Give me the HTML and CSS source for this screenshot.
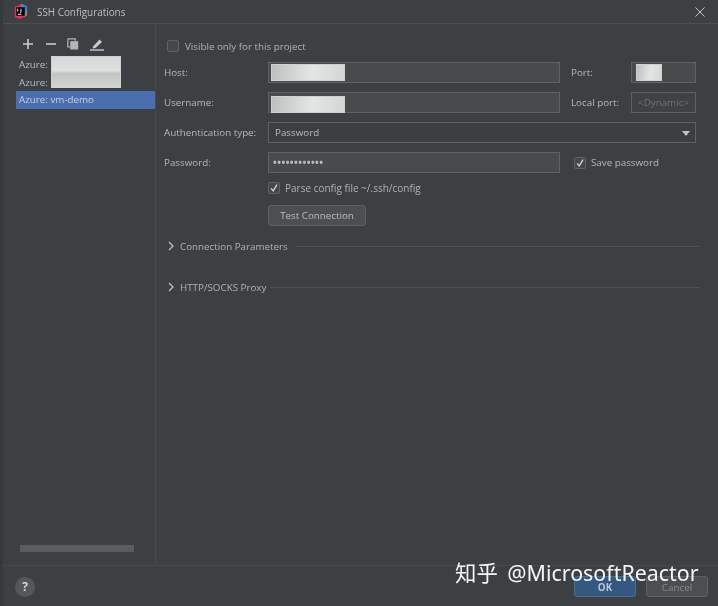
FILE: index.html
```html
<!DOCTYPE html>
<html lang="en">
<head>
<meta charset="utf-8">
<title>SSH Configurations</title>
<link rel="stylesheet" href="styles.css">
</head>
<body>
<div class="window">
  <header class="titlebar">
    <svg class="logo" viewBox="0 0 16 16" width="15" height="15">
      <defs>
        <linearGradient id="lg" x1="0" y1="0" x2="1" y2="1">
          <stop offset="0" stop-color="#21d789"/><stop offset=".45" stop-color="#087cfa"/><stop offset="1" stop-color="#fc801d"/>
        </linearGradient>
      </defs>
      <path d="M2 3 L9 0 L15 2 L15 12 L8 16 L2 14 Z" fill="#e0315e"/>
      <path d="M9 0 L15 2 L15 12 L12 14 Z" fill="url(#lg)"/>
      <rect x="3.5" y="3.5" width="9" height="9" fill="#000"/>
      <rect x="5" y="10.4" width="4" height="1" fill="#fff"/>
      <path d="M8.5 5v3.4q0 .9-1 .9" stroke="#fff" stroke-width="1" fill="none"/>
      <path d="M5 5v3" stroke="#fff" stroke-width="1" fill="none"/>
    </svg>
    <span class="title">SSH Configurations</span>
    <svg class="close" viewBox="0 0 10 10" width="10" height="10"><path d="M.5.5l9 9M9.5.5l-9 9" stroke="#c4c6c6" stroke-width="1" fill="none"/></svg>
  </header>

  <div class="main">
    <aside class="sidebar">
      <div class="toolbar">
        <svg class="tool" viewBox="0 0 12 12" width="12" height="12"><path d="M6 1v10M1 6h10" stroke="#c9cbcb" stroke-width="1.6"/></svg>
        <svg class="tool" viewBox="0 0 12 12" width="12" height="12"><path d="M1 6h10" stroke="#c9cbcb" stroke-width="1.6"/></svg>
        <svg class="tool" viewBox="0 0 12 12" width="12" height="12"><path d="M.8.8h7.4v2M.8.8v8h2" stroke="#b4b6b6" stroke-width="1.2" fill="none"/><rect x="3.2" y="3.2" width="8" height="8.3" fill="#b4b6b6"/></svg>
        <svg class="tool" viewBox="0 0 14 14" width="14" height="14"><path d="M3 9.5 L9.5 2.5 L12 5 L5.5 11 L2.8 11.4 Z" fill="#c9cbcb"/><path d="M0 13h14" stroke="#c9cbcb" stroke-width="1.4"/></svg>
      </div>
      <ul class="list">
        <li class="item">Azure:</li>
        <li class="item">Azure:</li>
        <li class="item selected">Azure: vm-demo</li>
      </ul>
      <div class="redact redact-list"></div>
      <div class="scrollbar"></div>
    </aside>

    <section class="content">
      <label class="check visible-only"><span class="box"></span>Visible only for this project</label>
      <div class="form">
        <span class="label">Host:</span>
        <div class="field"><span class="redact redact-field"></span></div>
        <span class="label label-r">Port:</span>
        <div class="field"><span class="redact redact-port"></span></div>

        <span class="label">Username:</span>
        <div class="field"><span class="redact redact-field redact-low"></span></div>
        <span class="label label-r">Local port:</span>
        <div class="field placeholder">&lt;Dynamic&gt;</div>

        <span class="label">Authentication type:</span>
        <div class="select">Password
          <svg class="caret" viewBox="0 0 8 5" width="8" height="5"><path d="M0 0h8L4 5z" fill="#c0c2c2"/></svg>
        </div>

        <span class="label">Password:</span>
        <div class="field dots">••••••••••••</div>
        <label class="check save"><span class="box on"><svg viewBox="0 0 12 12" width="12" height="12"><path d="M2.5 6.5l2.6 3L9.6 2" stroke="#d5d7d7" stroke-width="1.6" fill="none"/></svg></span>Save password</label>
      </div>
      <label class="check parse"><span class="box on"><svg viewBox="0 0 12 12" width="12" height="12"><path d="M2.5 6.5l2.6 3L9.6 2" stroke="#d5d7d7" stroke-width="1.6" fill="none"/></svg></span>Parse config file ~/.ssh/config</label>
      <button class="btn test">Test Connection</button>
      <div class="group group-conn">
        <svg class="chev" viewBox="0 0 6 10" width="6" height="10"><path d="M1 1l4 4-4 4" stroke="#c4c6c6" stroke-width="1.2" fill="none"/></svg>
        <span>Connection Parameters</span><i class="rule"></i>
      </div>
      <div class="group group-http">
        <svg class="chev" viewBox="0 0 6 10" width="6" height="10"><path d="M1 1l4 4-4 4" stroke="#c4c6c6" stroke-width="1.2" fill="none"/></svg>
        <span>HTTP/SOCKS Proxy</span><i class="rule"></i>
      </div>
    </section>
  </div>

  <footer class="footer">
    <span class="help">?</span>
    <div class="actions">
      <button class="btn ok">OK</button>
      <button class="btn cancel">Cancel</button>
    </div>
  </footer>
  <div class="watermark">知乎 @MicrosoftReactor</div>
</div>
</body>
</html>
```

FILE: styles.css
```css
* { box-sizing: border-box; }
html, body { margin: 0; padding: 0; }
body {
  width: 718px;
  height: 606px;
  overflow: hidden;
  background: #3c3f41;
  font-family: "Open Sans", "Noto Sans", sans-serif;
  font-size: 9.8px;
  color: #babcbc;
}
.window {
  position: relative;
  display: flex;
  flex-direction: column;
  width: 718px;
  height: 606px;
  background: #3d4042;
  border-left: 3px solid #36393a;
  filter: blur(.35px);
}
.titlebar {
  display: flex;
  align-items: center;
  height: 24px;
  padding: 0 13px 0 10px;
  border-bottom: 1px solid #4b4e50;
  flex: none;
}
.logo { flex: none; margin-top: -1px; }
.title { margin-left: 9px; font-size: 9.9px; color: #bcbebe; }
.close { margin-left: auto; }

.main { flex: 1; display: flex; min-height: 0; }
.sidebar {
  position: relative;
  width: 153px;
  flex: none;
  border-right: 1px solid #47494b;
  padding-top: 14px;
}
.toolbar { display: flex; align-items: center; gap: 10.5px; padding-left: 19px; height: 12px; }
.tool { flex: none; }
.list { list-style: none; margin: 6px 0 0 13px; padding: 0; }
.item { height: 17.5px; line-height: 17.5px; padding-left: 3px; }
.selected { background: #4b6eaf; color: #c8cfe0; width: 139px; }
.redact {
  display: block;
  background: linear-gradient(100deg, #bdbfbf, #e4e6e5 55%, #d4d6d5);
  border: 1px solid #cfd1d0;
}
.redact-list {
  position: absolute;
  left: 48px;
  top: 32px;
  width: 70px;
  height: 32px;
  background: linear-gradient(180deg, #d6d8d7, #dfe1e0 45%, #c3c5c5 55%, #d2d4d3);
}
.redact-field { position: absolute; left: 2px; top: 1px; width: 74px; height: 17px; }
.redact-low { top: 3px; }
.redact-port { position: absolute; left: 4px; top: 1px; width: 26px; height: 17px; }
.scrollbar { position: absolute; left: 17px; top: 521px; width: 114px; height: 7px; background: #5a5c5e; }

.content { flex: 1; padding: 15px 0 0 8px; position: relative; }
.check { display: flex; align-items: center; color: #b0b2b2; }
.box {
  display: flex;
  align-items: center;
  justify-content: center;
  width: 12px;
  height: 12px;
  flex: none;
  background: #44484a;
  border: 1px solid #5f6365;
  border-radius: 2px;
}
.visible-only { margin-left: 3px; gap: 1px; height: 14px; }
.visible-only .box { margin-right: 5px; }
.form {
  display: grid;
  grid-template-columns: 104px 292px 71px 65px;
  grid-template-rows: 21px 21px 21px 21px;
  row-gap: 9px;
  align-items: center;
  margin-top: 9px;
  width: 532px;
}
.label { color: #b6b8b8; }
.label-r { padding-left: 11px; }
.field {
  position: relative;
  height: 21px;
  background: #474b4b;
  border: 1px solid #5e6262;
  color: #babcbc;
}
.placeholder {
  background: #3f4244;
  color: #6f7274;
  text-align: center;
  line-height: 19px;
}
.dots { padding-left: 4px; line-height: 18px; font-size: 10px; font-weight: 700; letter-spacing: .45px; }
.select {
  grid-column: 2 / 5;
  position: relative;
  height: 21px;
  line-height: 19px;
  padding-left: 6px;
  border: 1px solid #5e6262;
  background: #3c3f41;
  color: #babcbc;
}
.caret { position: absolute; right: 5px; top: 8px; }
.save { grid-column: 3 / 5; margin-left: 14px; color: #b6b8b8; }
.save .box { margin-right: 5px; }
.parse { margin: 8px 0 0 104px; height: 14px; font-size: 10px; }
.parse .box { margin-right: 5px; }
.btn {
  font-family: inherit;
  font-size: 9.8px;
  height: 21px;
  border-radius: 3px;
  color: #babcbc;
  background: #4b4f51;
  border: 1px solid #5e6264;
  padding: 0;
}
.test { display: block; width: 98px; margin: 10px 0 0 104px; }
.group {
  display: flex;
  align-items: center;
  height: 14px;
  margin-left: 4px;
  color: #b0b2b2;
}
.chev { flex: none; margin-right: 6px; }
.rule { flex: 1; height: 1px; background: #505355; margin-left: 7px; margin-right: 19px; }
.group-conn { margin-top: 13px; }
.group-http { margin-top: 27px; }
.group-http .rule { margin-left: 4px; }

.footer {
  height: 41px;
  flex: none;
  display: flex;
  align-items: center;
  justify-content: space-between;
  border-top: 1px solid #47494b;
  padding: 0 10px 0 12px;
}
.help {
  width: 20px;
  height: 20px;
  border-radius: 50%;
  background: #55585a;
  color: #d4d6d6;
  font-weight: 700;
  font-size: 12px;
  line-height: 20px;
  text-align: center;
  margin-top: 1px;
}
.actions { display: flex; gap: 10px; margin-top: 1px; }
.ok { width: 62px; background: #365880; border-color: #4c708c; color: #b5c5d8; font-weight: 700; padding-top: 1px; }
.cancel { width: 62px; background: #4b4f51; color: #8a8d8f; padding-top: 1px; }
.watermark {
  position: absolute;
  left: 452px;
  top: 558px;
  font-family: "Noto Sans", "Noto Sans CJK SC", sans-serif;
  font-size: 21.4px;
  word-spacing: 4px;
  line-height: 30px;
  color: #f4f5f5;
  white-space: nowrap;
}
```
